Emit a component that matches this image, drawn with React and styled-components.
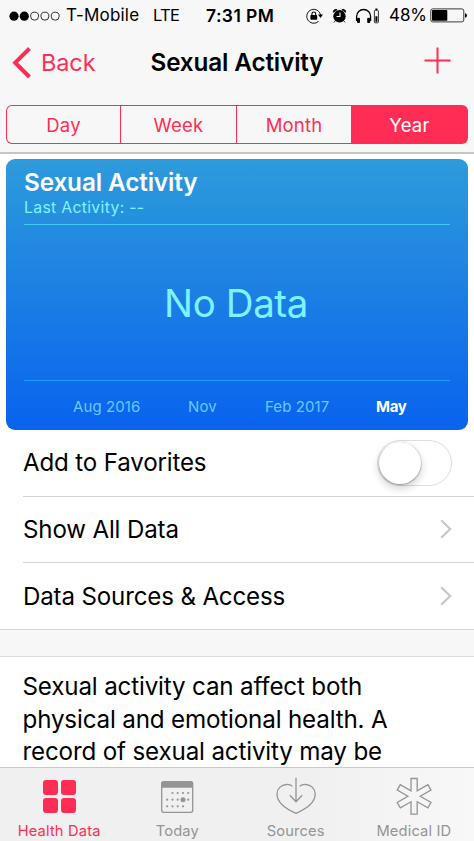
import React, { useState } from 'react'
import styled, { createGlobalStyle } from 'styled-components'

const GlobalStyle = createGlobalStyle`
  * {
    box-sizing: border-box;
  }

  body {
    margin: 0;
    background: #ffffff;
    font-family: Inter, "Liberation Sans", sans-serif;
    color: #000000;
  }

  svg {
    display: block;
    flex: none;
  }
`

const Screen = styled.div`
  width: 474px;
  height: 841px;
  display: flex;
  flex-direction: column;
  overflow: hidden;
  background: #ffffff;
`

const Header = styled.header`
  flex: none;
  height: 154px;
  background: #f7f7f7;
  border-bottom: 2px solid #c5c6ca;
`

const StatusBar = styled.div`
  display: flex;
  align-items: center;
  height: 31px;
  padding-left: 9px;
  font-size: 17px;
  line-height: 31px;
  white-space: nowrap;
`

const Carrier = styled.span`
  width: 87px;
  margin-left: 6px;
  letter-spacing: 0.2px;
`

const Network = styled.span`
  width: 53px;
  font-size: 16.5px;
  letter-spacing: -0.7px;
`

const Clock = styled.span`
  width: 99px;
  font-size: 17.5px;
  font-weight: 600;
  letter-spacing: 0.4px;
`

const Percent = styled.span`
  width: 41px;
  margin-left: 9px;
  letter-spacing: -0.1px;
`

const NavBar = styled.div`
  display: grid;
  grid-template-columns: 120px 1fr 120px;
  align-items: center;
  height: 63px;
`

const Button = styled.button`
  margin: 0;
  padding: 0;
  border: none;
  background: none;
  font-family: inherit;
`

const BackButton = styled(Button)`
  display: flex;
  align-items: center;
  gap: 9px;
  padding-left: 12px;
  color: #ff2d55;
  font-size: 23.5px;
  line-height: 30px;
  letter-spacing: -0.1px;
`

const NavTitle = styled.h1`
  margin: 0;
  padding-bottom: 2px;
  text-align: center;
  font-size: 24.3px;
  font-weight: 600;
  line-height: 30px;
  letter-spacing: -0.15px;
  white-space: nowrap;
`

const AddButton = styled(Button)`
  justify-self: end;
  margin-right: 23px;
`

const Segments = styled.div`
  display: grid;
  grid-template-columns: 113px 115px 114px 1fr;
  gap: 1px;
  height: 39px;
  margin: 11px 6px 0;
  padding: 1px;
  border-radius: 6px;
  overflow: hidden;
  background: #ff2d55;
`

const Segment = styled(Button)`
  color: ${props => (props.$active ? '#ffffff' : '#ff2d55')};
  background: ${props => (props.$active ? '#ff2d55' : '#f7f7f7')};
  font-size: 18.5px;
  letter-spacing: 0.2px;

  &:first-child {
    border-radius: 5px 0 0 5px;
  }

  &:last-child {
    border-radius: 0 5px 5px 0;
  }
`

const Content = styled.main`
  flex: 1;
  min-height: 0;
  overflow: hidden;
`

const Card = styled.section`
  display: flex;
  flex-direction: column;
  height: 271px;
  margin: 5px 6px 0;
  padding: 9px 18px 0;
  border-radius: 9px;
  background: linear-gradient(#2e9bdb, #0863ee);
  color: #7cf3ff;
`

const CardTitle = styled.h2`
  margin: 0;
  height: 29px;
  color: #ffffff;
  font-size: 24.3px;
  font-weight: 600;
  line-height: 28px;
  letter-spacing: -0.12px;
`

const CardSubtitle = styled.p`
  margin: 0;
  height: 27px;
  font-size: 15.8px;
  line-height: 22px;
  letter-spacing: 0.3px;
`

const Chart = styled.div`
  display: flex;
  align-items: center;
  justify-content: center;
  height: 157px;
  padding-right: 2px;
  border-top: 1px solid #42c8f3;
  border-bottom: 1px solid #1d9eff;
  font-size: 38.5px;
  letter-spacing: -0.4px;
`

const Axis = styled.div`
  display: flex;
  padding-left: 49px;
  margin-top: 15px;
  font-size: 15px;
  line-height: 22px;
  letter-spacing: 0.1px;
  white-space: nowrap;
`

const AxisLabel = styled.span`
  width: ${props => props.$width}px;
  color: ${props => (props.$current ? '#ffffff' : '#68c8ff')};
  font-weight: ${props => (props.$current ? 700 : 400)};
  letter-spacing: ${props => (props.$current ? '-0.3px' : 'inherit')};
`

const Row = styled.div`
  display: flex;
  align-items: center;
  justify-content: space-between;
  height: ${props => props.$height || 66.5}px;
  margin-left: 23px;
  padding-right: 22px;
  border-bottom: ${props => (props.$last ? 'none' : '1px solid #d3d3d5')};
  font-size: 24.1px;
  letter-spacing: -0.15px;
`

const Switch = styled(Button)`
  display: flex;
  align-items: flex-start;
  width: 75px;
  height: 46px;
  padding: 1px;
  border: 1.5px solid #dedede;
  border-radius: 23px;
  background: #ffffff;
`

const Knob = styled.span`
  width: 42px;
  height: 42px;
  border-radius: 50%;
  background: #ffffff;
  box-shadow: 0 0.5px 1px 0.5px rgba(0, 0, 0, 0.28), 0 4px 9px rgba(0, 0, 0, 0.2);
  transform: translateX(${props => (props.$on ? 28 : 0)}px);
`

const Gap = styled.div`
  height: 28px;
  background: #f7f7f7;
  border-top: 1px solid #d3d3d5;
  border-bottom: 1px solid #dedee0;
`

const Description = styled.p`
  margin: 14px 22.5px 0;
  font-size: 24.2px;
  line-height: 32.5px;
  letter-spacing: -0.17px;
  white-space: nowrap;
`

const TabBar = styled.nav`
  flex: none;
  display: grid;
  grid-template-columns: repeat(4, 1fr);
  height: 74px;
  padding-right: 1px;
  background: linear-gradient(90deg, #f0f0f0 65%, #f8f8f8);
  border-top: 1px solid #c9c9c9;
`

const Tab = styled(Button)`
  display: flex;
  flex-direction: column;
  align-items: center;
  padding-top: 7px;
  color: ${props => (props.$active ? '#ff2d55' : '#949494')};
  font-size: 14.7px;
  line-height: 20px;
  letter-spacing: 0.15px;
  white-space: nowrap;
`

const TabIcon = styled.svg`
  width: 44px;
  height: 44px;
  margin-bottom: 2px;
`

const SignalDots = () => (
  <svg width="51" height="12" viewBox="0 0 51 12">
    {[0, 1, 2, 3, 4].map(i => (
      <circle
        key={i}
        cx={5 + i * 10.3}
        cy="6.2"
        r={i < 2 ? 4.6 : 4}
        fill={i < 2 ? '#000' : 'none'}
        stroke="#000"
        strokeWidth={i < 2 ? 0 : 0.8}
      />
    ))}
  </svg>
)

const StatusIcons = () => (
  <svg width="75" height="20" viewBox="305 5 75 20">
    {/* rotation lock */}
    <path d="M318.6 20.3A7 7 0 1 1 320.6 14" fill="none" stroke="#000" strokeWidth="0.9" />
    <path d="M318 13.5h5l-2.5 3.4z" />
    <rect x="310.4" y="14" width="6.8" height="4.8" rx="0.7" />
    <path d="M311.9 14.5v-1.6a1.9 1.9 0 0 1 3.8 0v1.6" fill="none" stroke="#000" strokeWidth="1.1" />
    {/* alarm */}
    <circle cx="339.5" cy="15.3" r="6.2" />
    <path d="M333.3 11.3a2.6 2.6 0 0 1 3.8-2.6zM345.7 11.3a2.6 2.6 0 0 0-3.8-2.6zM335.5 19.5l-1.6 2M343.5 19.5l1.6 2" stroke="#000" strokeWidth="0.8" />
    <path d="M340 11.5v4h-3.4" fill="none" stroke="#fff" strokeWidth="1.1" />
    {/* headphones with their battery */}
    <path d="M356.6 20v-4.5a7 7 0 0 1 14 0V20" fill="none" stroke="#000" strokeWidth="1.3" />
    <rect x="357" y="16.8" width="3" height="5.3" rx="1" />
    <rect x="367.2" y="16.8" width="3" height="5.3" rx="1" />
    <rect x="374.4" y="9.3" width="4" height="12.5" rx="0.8" fill="none" stroke="#000" strokeWidth="0.8" />
    <path d="M375.4 7.5h2v1.5h-2zM375.4 15.3h2v5.5h-2z" />
  </svg>
)

const Battery = () => (
  <svg width="38" height="15" viewBox="0 0 38 15">
    <rect x="0.8" y="0.9" width="33" height="13" rx="2" fill="none" stroke="#222" strokeWidth="0.9" />
    <rect x="2" y="2.1" width="15.3" height="10.6" rx="0.8" />
    <path d="M35 5.2q2 .6 2 2.3t-2 2.3z" />
  </svg>
)

const Chevron = () => (
  <svg width="12" height="20" viewBox="0 0 12 20" fill="none" stroke="#c7c7cc" strokeWidth="2.2">
    <path d="M1.2 1.2L10.2 10L1.2 18.8" />
  </svg>
)

const HealthIcon = () => (
  <TabIcon viewBox="0 0 44 44" fill="currentColor">
    <rect x="6" y="5" width="15" height="15" rx="3" />
    <rect x="24" y="5" width="15" height="15" rx="3" />
    <rect x="6" y="23" width="15" height="15" rx="3" />
    <rect x="24" y="23" width="15" height="15" rx="3" />
  </TabIcon>
)

const calendarDots = [
  [17.5, 18], [22.7, 18], [28, 18], [33.2, 18],
  [12.2, 24.7], [17.5, 24.7], [22.7, 24.7], [33.2, 24.7],
  [12.2, 31.3], [17.5, 31.3], [22.7, 31.3], [28, 31.3]
]

const TodayIcon = () => (
  <TabIcon viewBox="0 0 44 44" fill="currentColor">
    <rect x="6.7" y="6.7" width="31" height="30.6" rx="2" fill="none" stroke="currentColor" strokeWidth="1.3" />
    <path d="M6.5 12.8V8.5a2 2 0 0 1 2-2h27.4a2 2 0 0 1 2 2v4.3z" />
    {calendarDots.map(([x, y]) => <circle key={`${x}-${y}`} cx={x} cy={y} r="1.1" />)}
    <circle cx="28" cy="24.7" r="2.5" />
  </TabIcon>
)

const SourcesIcon = () => (
  <TabIcon viewBox="0 0 44 44" fill="none" stroke="currentColor" strokeWidth="1.3">
    <path d="M18.5 11.2C16.5 9.8 14.5 9.3 12.5 9.5C7 9.8 3 13.8 3 19C3 28 12 34 22 38.3C32 34 41.2 28 41.2 19C41.2 13.8 37 9.8 31.8 9.5C29.6 9.3 27.5 9.8 25.5 11.2" />
    <path d="M22 2.7V26.5M15.8 20.2L22 26.7L28.2 20.2" />
  </TabIcon>
)

const MedicalIcon = () => (
  <TabIcon viewBox="0 0 44 44" fill="none" stroke="currentColor" strokeWidth="1.3">
    <path d="M19 3.5h6.2v12.3l10.7-6.1 3.1 5.4L28.3 21.3 39 27.5l-3.1 5.4-10.7-6.1v12.3H19V26.8L8.3 32.9l-3.1-5.4L15.9 21.3 5.2 15.1l3.1-5.4L19 15.8z" />
  </TabIcon>
)

const ranges = ['Day', 'Week', 'Month', 'Year']

const months = [
  { label: 'Aug 2016', width: 115 },
  { label: 'Nov', width: 77 },
  { label: 'Feb 2017', width: 111 },
  { label: 'May', width: 40, current: true }
]

const tabs = [
  { label: 'Health Data', Icon: HealthIcon },
  { label: 'Today', Icon: TodayIcon },
  { label: 'Sources', Icon: SourcesIcon },
  { label: 'Medical ID', Icon: MedicalIcon }
]

const App = () => {
  const [range, setRange] = useState('Year')
  const [favorite, setFavorite] = useState(false)
  const [tab, setTab] = useState('Health Data')

  return (
    <Screen>
      <GlobalStyle />
      <Header>
        <StatusBar>
          <SignalDots />
          <Carrier>T-Mobile</Carrier>
          <Network>LTE</Network>
          <Clock>7:31 PM</Clock>
          <StatusIcons />
          <Percent>48%</Percent>
          <Battery />
        </StatusBar>
        <NavBar>
          <BackButton>
            <svg width="20" height="32" viewBox="0 0 20 32" fill="none" stroke="#ff2d55" strokeWidth="4">
              <path d="M17.5 1.5L3.2 15.7L17.5 30" />
            </svg>
            Back
          </BackButton>
          <NavTitle>Sexual Activity</NavTitle>
          <AddButton>
            <svg width="27" height="31" viewBox="0 0 27 31" stroke="#ff2d55" strokeWidth="2">
              <path d="M0.5 13.5H26.5M13.5 0.5V26.5" />
            </svg>
          </AddButton>
        </NavBar>
        <Segments>
          {ranges.map(name => (
            <Segment key={name} $active={name === range} onClick={() => setRange(name)}>
              {name}
            </Segment>
          ))}
        </Segments>
      </Header>

      <Content>
        <Card>
          <CardTitle>Sexual Activity</CardTitle>
          <CardSubtitle>Last Activity: --</CardSubtitle>
          <Chart>No Data</Chart>
          <Axis>
            {months.map(month => (
              <AxisLabel key={month.label} $width={month.width} $current={month.current}>
                {month.label}
              </AxisLabel>
            ))}
          </Axis>
        </Card>
        <Row>
          Add to Favorites
          <Switch onClick={() => setFavorite(!favorite)}>
            <Knob $on={favorite} />
          </Switch>
        </Row>
        <Row>
          Show All Data
          <Chevron />
        </Row>
        <Row $last $height={66}>
          Data Sources &amp; Access
          <Chevron />
        </Row>
        <Gap />
        <Description>
          Sexual activity can affect both<br />
          physical and emotional health. A<br />
          record of sexual activity may be
        </Description>
      </Content>

      <TabBar>
        {tabs.map(({ label, Icon }) => (
          <Tab key={label} $active={label === tab} onClick={() => setTab(label)}>
            <Icon />
            {label}
          </Tab>
        ))}
      </TabBar>
    </Screen>
  )
}

export default App
